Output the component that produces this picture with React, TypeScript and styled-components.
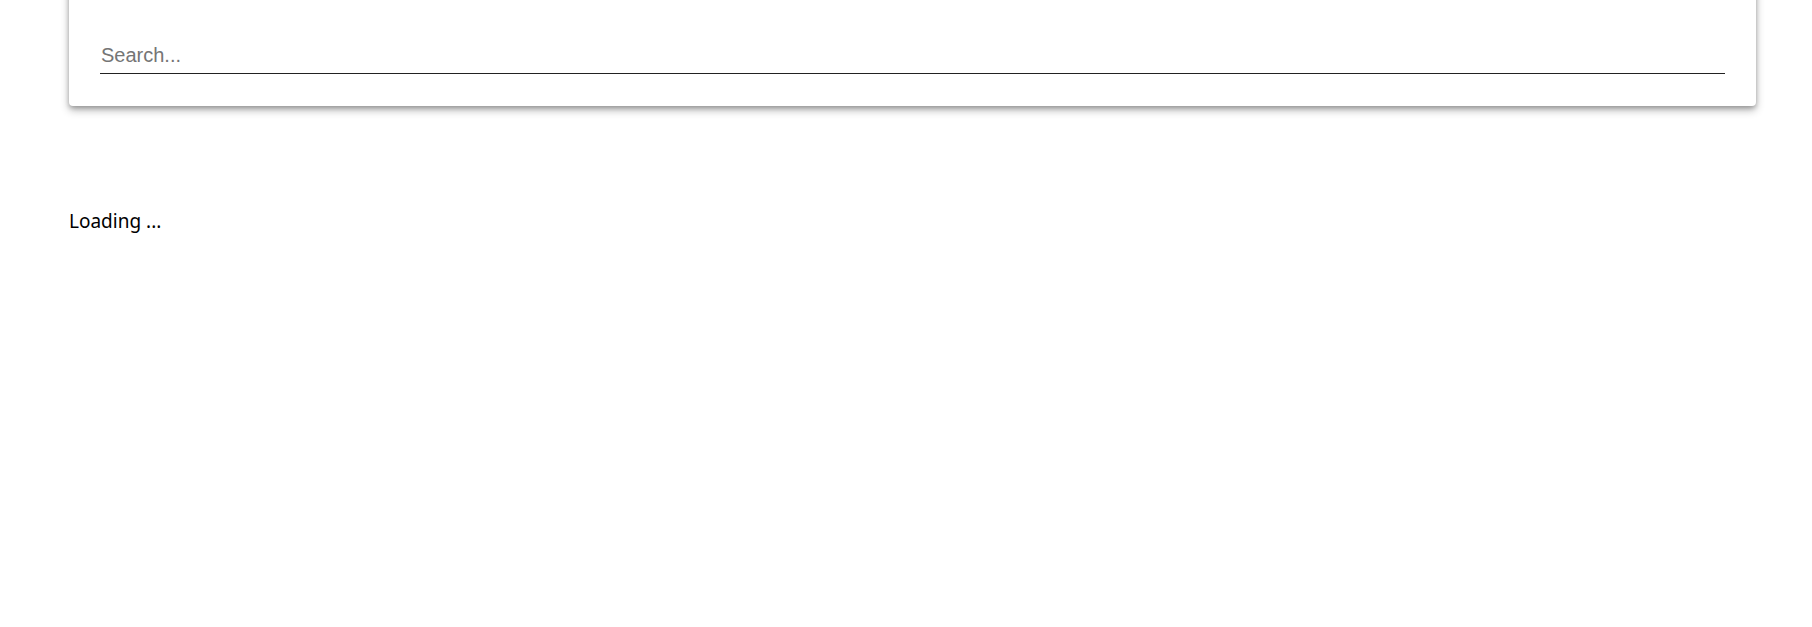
import React from "react";
import styled, { createGlobalStyle } from "styled-components";

const GlobalStyle = createGlobalStyle`
  html, body {
    margin: 0;
    padding: 0;
    background: #ffffff;
    overflow: hidden;
  }
  body {
    font-family: "Noto Sans", "Open Sans", sans-serif;
    color: #000000;
  }
`;

const Page = styled.div`
  display: flex;
  flex-direction: column;
  padding: 0 56px 0 69px;
`;

const Card = styled.div`
  margin-top: -17px;
  background: #ffffff;
  border-radius: 0 0 4px 4px;
  box-shadow: 0 4px 8px rgba(0, 0, 0, 0.3), 0 2px 4px rgba(0, 0, 0, 0.2);
  padding: 61px 31px 32px 31px;
`;

const SearchInput = styled.input`
  display: block;
  width: 100%;
  box-sizing: border-box;
  border: none;
  border-bottom: 1px solid #222222;
  outline: none;
  background: transparent;
  font-family: "Liberation Sans", Arial, sans-serif;
  font-size: 20px;
  line-height: 23px;
  height: 30px;
  padding: 0 1px 6px 1px;
  color: #222;

  &::placeholder {
    color: #757575;
    opacity: 1;
  }
`;

const Loading = styled.div`
  margin-top: 102px;
  font-family: "Noto Sans", "Open Sans", sans-serif;
  font-size: 19px;
  line-height: 26px;
  color: #000000;
`;

export default function App() {
  return (
    <>
      <GlobalStyle />
      <Page>
        <Card>
          <SearchInput placeholder="Search..." />
        </Card>
        <Loading>Loading ...</Loading>
      </Page>
    </>
  );
}
